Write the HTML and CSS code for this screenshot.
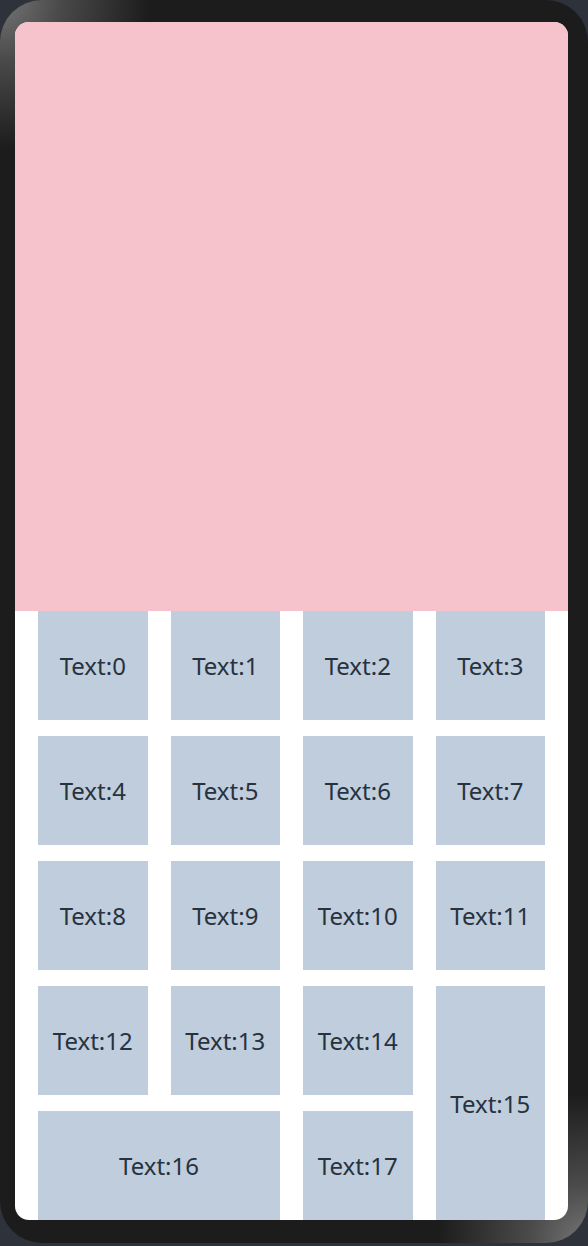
FILE: index.html
```html
<!DOCTYPE html>
<html>
<head>
<meta charset="utf-8">
<link rel="stylesheet" href="styles.css">
</head>
<body>
<div class="frame">
  <div class="screen">
    <div class="banner"></div>
    <div class="grid">
      <div class="cell">Text:0</div>
      <div class="cell">Text:1</div>
      <div class="cell">Text:2</div>
      <div class="cell">Text:3</div>
      <div class="cell">Text:4</div>
      <div class="cell">Text:5</div>
      <div class="cell">Text:6</div>
      <div class="cell">Text:7</div>
      <div class="cell">Text:8</div>
      <div class="cell">Text:9</div>
      <div class="cell">Text:10</div>
      <div class="cell">Text:11</div>
      <div class="cell">Text:12</div>
      <div class="cell">Text:13</div>
      <div class="cell">Text:14</div>
      <div class="cell tall">Text:15</div>
      <div class="cell wide">Text:16</div>
      <div class="cell">Text:17</div>
    </div>
  </div>
</div>
</body>
</html>
```
FILE: styles.css
```css
html, body {
  margin: 0;
  padding: 0;
  background: #2d323b;
}
body {
  width: 588px;
  height: 1246px;
  overflow: hidden;
}
.frame {
  box-sizing: border-box;
  width: 588px;
  height: 1243px;
  margin-top: 0;
  border-radius: 42px;
  padding: 22px 20px 23px 15px;
  background:
    radial-gradient(circle at 0 0, #767676 0, #4a4a4a 60px, #1c1c1c 150px, rgba(28,28,28,0) 160px),
    radial-gradient(circle at 100% 100%, #767676 0, #4a4a4a 60px, #1c1c1c 150px, rgba(28,28,28,0) 160px),
    #1c1c1c;
  display: flex;
}
.screen {
  flex: 1;
  background: #ffffff;
  border-radius: 14px;
  overflow: hidden;
  display: flex;
  flex-direction: column;
}
.banner {
  height: 589px;
  background: #f6c3cd;
  flex: none;
}
.grid {
  display: grid;
  grid-template-columns: repeat(4, 1fr);
  grid-auto-rows: 109px;
  column-gap: 23px;
  row-gap: 16px;
  padding: 0 23px;
}
.cell {
  background: #bfcddc;
  color: #27323f;
  font-family: "Noto Sans", "Open Sans", sans-serif;
  font-size: 24px;
  display: flex;
  align-items: center;
  justify-content: center;
}
.tall {
  grid-column: 4;
  grid-row: 4 / span 2;
}
.wide {
  grid-column: 1 / span 2;
}
```
